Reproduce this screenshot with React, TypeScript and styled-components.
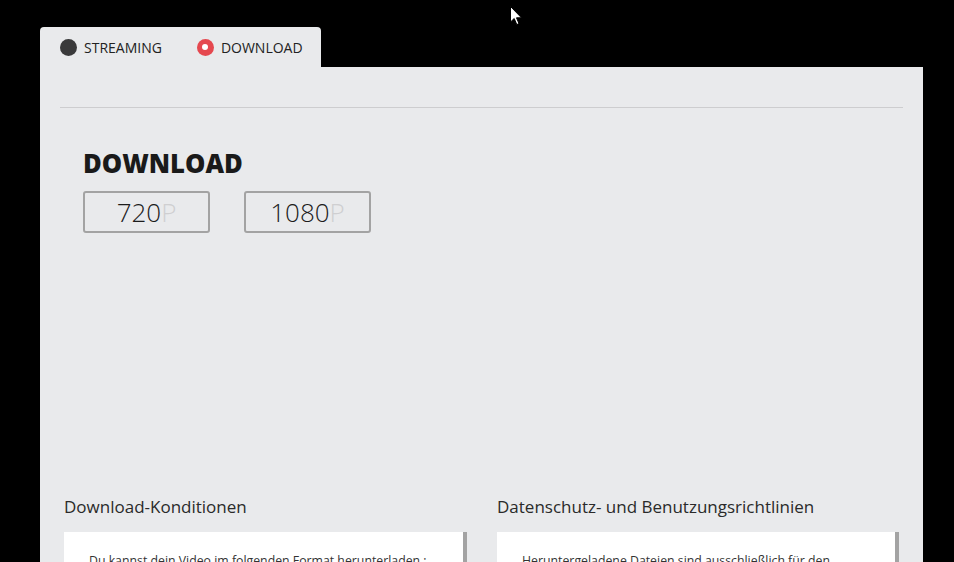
import * as React from 'react';
import styled, { createGlobalStyle } from 'styled-components';

const GlobalStyle = createGlobalStyle`
  html, body {
    margin: 0;
    padding: 0;
    background: #000;
    overflow: hidden;
  }
  body {
    font-family: "Open Sans", "Noto Sans", sans-serif;
    color: #222;
  }
`;

export default function App() {
  return (
    <Page>
      <GlobalStyle />
      <Cursor width="13" height="20" viewBox="0 0 13 20">
        <path d="M0.5 0.5 L0.5 16 L4.2 12.5 L6.8 18.6 L9 17.6 L6.5 11.8 L11.5 11.8 Z" fill="#fff" stroke="#000" strokeWidth="1" />
      </Cursor>
      <TabBar>
        <TabItem>
          <Radio $active={false} />
          <span>STREAMING</span>
        </TabItem>
        <TabItem>
          <Radio $active />
          <span>DOWNLOAD</span>
        </TabItem>
      </TabBar>
      <Panel>
        <Divider />
        <DownloadSection>
          <Heading>DOWNLOAD</Heading>
          <QualityRow>
            <QualityBtn>720<Suffix>P</Suffix></QualityBtn>
            <QualityBtn>1080<Suffix>P</Suffix></QualityBtn>
          </QualityRow>
        </DownloadSection>
        <InfoGrid>
          <InfoColumn>
            <InfoTitle>Download-Konditionen</InfoTitle>
            <InfoBox>
              <p>Du kannst dein Video im folgenden Format herunterladen :</p>
            </InfoBox>
          </InfoColumn>
          <InfoColumn>
            <InfoTitle>Datenschutz- und Benutzungsrichtlinien</InfoTitle>
            <InfoBox>
              <p>Heruntergeladene Dateien sind ausschließlich für den</p>
            </InfoBox>
          </InfoColumn>
        </InfoGrid>
      </Panel>
    </Page>
  );
}

const Page = styled.div`
  position: relative;
  width: 954px;
  height: 562px;
  padding: 27px 0 0 40px;
  box-sizing: border-box;
  overflow: hidden;
`;

const Cursor = styled.svg`
  position: absolute;
  left: 510px;
  top: 6px;
`;

const TabBar = styled.div`
  display: flex;
  align-items: center;
  gap: 35px;
  width: 281px;
  height: 40px;
  padding: 0 0 0 20px;
  box-sizing: border-box;
  background: #e9eaec;
  border-radius: 4px 4px 0 0;
`;

const TabItem = styled.div`
  display: flex;
  align-items: center;
  gap: 7px;
  font-size: 14px;
  color: #222;
  cursor: pointer;
`;

const Radio = styled.span<{ $active: boolean }>`
  position: relative;
  width: 17px;
  height: 17px;
  border-radius: 50%;
  background: ${p => (p.$active ? '#e5484f' : '#3a3a3b')};
  &::after {
    content: '';
    display: ${p => (p.$active ? 'block' : 'none')};
    position: absolute;
    left: 5.5px;
    top: 5.5px;
    width: 6px;
    height: 6px;
    border-radius: 50%;
    background: #fff;
  }
`;

const Panel = styled.div`
  width: 883px;
  height: 520px;
  padding: 40px 20px 0 20px;
  box-sizing: border-box;
  background: #e9eaec;
`;

const Divider = styled.div`
  height: 1px;
  background: #cdcdcf;
`;

const DownloadSection = styled.div`
  display: flex;
  flex-direction: column;
  gap: 14px;
  padding: 43px 0 0 23px;
`;

const Heading = styled.h2`
  margin: 0;
  font-size: 25.6px;
  line-height: 1;
  font-weight: 800;
  color: #1a1a1a;
`;

const QualityRow = styled.div`
  display: flex;
  gap: 34px;
`;

const QualityBtn = styled.button`
  width: 127px;
  height: 42px;
  border: 2px solid #a3a3a3;
  border-radius: 3px;
  background: transparent;
  font-family: "Open Sans", sans-serif;
  font-weight: 300;
  font-size: 26px;
  line-height: 1;
  color: #1c1c1c;
  padding: 0;
  cursor: pointer;
  display: flex;
  align-items: center;
  justify-content: center;
`;

const Suffix = styled.span`
  color: #cfcfd1;
`;

const InfoGrid = styled.div`
  display: grid;
  grid-template-columns: 403px 402px;
  column-gap: 30px;
  margin-top: 265px;
  padding-left: 4px;
`;

const InfoColumn = styled.div`
  display: flex;
  flex-direction: column;
  gap: 17px;
`;

const InfoTitle = styled.h3`
  margin: 0;
  font-size: 17px;
  line-height: 1;
  font-weight: 400;
  color: #2a2a2a;
`;

const InfoBox = styled.div`
  height: 120px;
  background: #fff;
  border-right: 4px solid #a3a3a3;
  padding: 19px 25px 0 25px;
  font-size: 12.3px;
  line-height: 20px;
  color: #333;
  p {
    margin: 0;
    white-space: nowrap;
  }
`;
